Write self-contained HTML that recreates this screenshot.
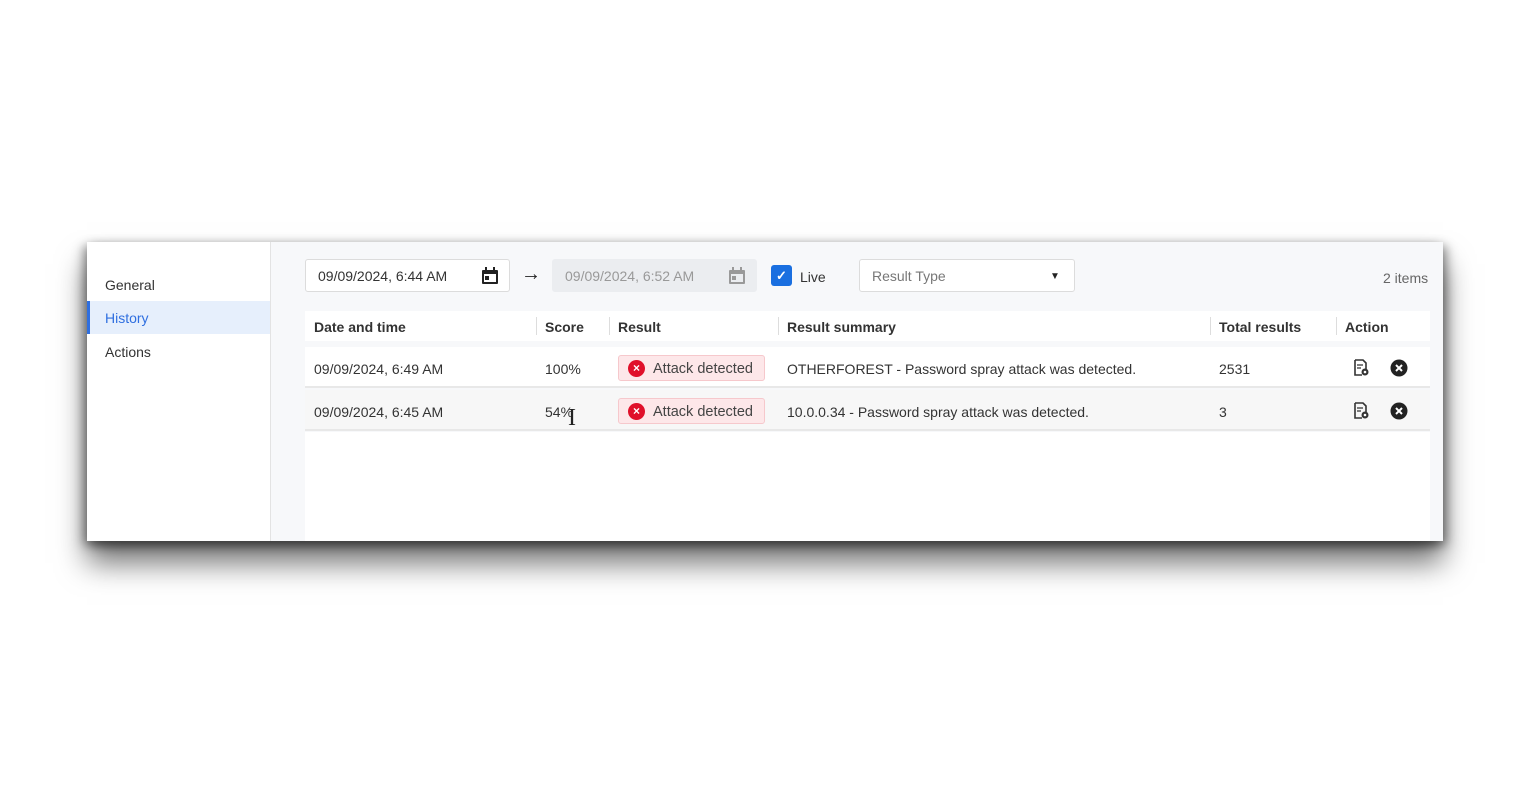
<!DOCTYPE html>
<html><head><meta charset="utf-8"><style>
*{box-sizing:border-box;margin:0;padding:0}
body{width:1536px;height:786px;background:#fff;font-family:"Liberation Sans",sans-serif;font-size:14px;color:#333;position:relative;overflow:hidden}
.panel{position:absolute;left:87px;top:242px;width:1356px;height:299px;background:#f7f8fa;box-shadow:0 22px 28px rgba(0,0,0,.55),-4px 4px 10px rgba(0,0,0,.35),4px 4px 10px rgba(0,0,0,.35)}
.side{position:absolute;left:0;top:0;width:184px;height:299px;background:#fff;border-right:1px solid #e3e3e3}
.side div{position:absolute;left:18px}
.hist{position:absolute;left:0!important;top:59px;width:183px;height:33px;background:#e6effc;border-left:3px solid #2f6fe0;color:#2f6fe0;padding-left:15px;line-height:35px}
.abs{position:absolute}
.box{position:absolute;height:33px;border:1px solid #dcdcdc;border-radius:3px;background:#fff;line-height:33px;padding-left:12px}
.th{position:absolute;top:69px;left:218px;width:1125px;height:30px;background:#fff;font-weight:bold;color:#333}
.th span,.row span{position:absolute;top:0}
.th span{line-height:32px}
.sep{position:absolute;top:6px;width:1px;height:18px;background:#ddd}
.row{position:absolute;left:218px;width:1125px;height:41px;background:#fff;line-height:44px;border-bottom:2px solid #e8e8e8}
.badge{position:absolute;top:8px;left:313px;width:147px;height:26px;background:#fde7e9;border:1px solid #f6c8cc;border-radius:3px;line-height:26px;padding-left:34px;color:#444;font-size:14.5px}
.badge i{position:absolute;left:9px;top:4px;width:17px;height:17px;border-radius:50%;background:#e0102a;color:#fff;font-style:normal;font-size:12px;line-height:17px;text-align:center;font-weight:bold}
</style></head><body>
<div class="panel">
 <div class="side">
  <div style="top:35px">General</div>
  <div class="hist">History</div>
  <div style="top:102px">Actions</div>
 </div>
 <div class="box" style="left:218px;top:17px;width:205px">09/09/2024, 6:44 AM
  <svg class="abs" style="left:175px;top:7px" width="18" height="18" viewBox="0 0 18 18"><rect x="1" y="3" width="16" height="14" rx="1" fill="#222"/><rect x="4" y="0" width="2" height="5" fill="#222"/><rect x="12" y="0" width="2" height="5" fill="#222"/><rect x="3" y="7" width="12" height="8" fill="#fff"/><rect x="4" y="9" width="4" height="4" fill="#222"/></svg></div>
 <div class="abs" style="left:434px;top:21px;font-size:20px;color:#222">→</div>
 <div class="box" style="left:465px;top:17px;width:205px;background:#ebedf0;border-color:#ebedf0;color:#999">09/09/2024, 6:52 AM
  <svg class="abs" style="left:175px;top:7px" width="18" height="18" viewBox="0 0 18 18"><rect x="1" y="3" width="16" height="14" rx="1" fill="#999"/><rect x="4" y="0" width="2" height="5" fill="#999"/><rect x="12" y="0" width="2" height="5" fill="#999"/><rect x="3" y="7" width="12" height="8" fill="#ebedf0"/><rect x="4" y="9" width="4" height="4" fill="#999"/></svg></div>
 <div class="abs" style="left:684px;top:23px;width:21px;height:21px;background:#1a6fe0;border-radius:3px;color:#fff;text-align:center;line-height:21px;font-size:13px;font-weight:bold">✓</div>
 <div class="abs" style="left:713px;top:27px;color:#333">Live</div>
 <div class="box" style="left:772px;top:17px;width:216px;color:#777">Result Type<span class="abs" style="left:190px;top:0;font-size:10px;color:#222">▼</span></div>
 <div class="abs" style="left:1296px;top:28px;color:#666">2 items</div>
 <div class="abs" style="left:218px;top:190px;width:1125px;height:109px;background:#fff"></div>
 <div class="th">
  <span style="left:9px">Date and time</span>
  <div class="sep" style="left:231px"></div><span style="left:240px">Score</span>
  <div class="sep" style="left:304px"></div><span style="left:313px">Result</span>
  <div class="sep" style="left:473px"></div><span style="left:482px">Result summary</span>
  <div class="sep" style="left:905px"></div><span style="left:914px">Total results</span>
  <div class="sep" style="left:1031px"></div><span style="left:1040px">Action</span>
 </div>
 <div class="row" style="top:105px">
  <span style="left:9px">09/09/2024, 6:49 AM</span><span style="left:240px">100%</span>
  <div class="badge"><i>×</i>Attack detected</div>
  <span style="left:482px">OTHERFOREST - Password spray attack was detected.</span>
  <span style="left:914px">2531</span>
  <svg class="abs" style="left:1047px;top:12px" width="18" height="18" viewBox="0 0 18 18"><path d="M3 1h8l3 3v6M3 1v15h7" fill="none" stroke="#333" stroke-width="1.6"/><path d="M5 6h6M5 9h4" stroke="#333" stroke-width="1.3"/><circle cx="13" cy="13" r="3.5" fill="#333"/><circle cx="13" cy="13" r="1.3" fill="#fff"/></svg>
  <svg class="abs" style="left:1085px;top:12px" width="18" height="18" viewBox="0 0 18 18"><circle cx="9" cy="9" r="8.5" fill="#222"/><path d="M6 6l6 6M12 6l-6 6" stroke="#fff" stroke-width="2"/></svg>
 </div>
 <div class="row" style="top:148px;background:#f7f7f7">
  <span style="left:9px">09/09/2024, 6:45 AM</span><span style="left:240px">54%</span>
  <div class="badge"><i>×</i>Attack detected</div>
  <span style="left:482px">10.0.0.34 - Password spray attack was detected.</span>
  <span style="left:914px">3</span>
  <svg class="abs" style="left:1047px;top:12px" width="18" height="18" viewBox="0 0 18 18"><path d="M3 1h8l3 3v6M3 1v15h7" fill="none" stroke="#333" stroke-width="1.6"/><path d="M5 6h6M5 9h4" stroke="#333" stroke-width="1.3"/><circle cx="13" cy="13" r="3.5" fill="#333"/><circle cx="13" cy="13" r="1.3" fill="#fff"/></svg>
  <svg class="abs" style="left:1085px;top:12px" width="18" height="18" viewBox="0 0 18 18"><circle cx="9" cy="9" r="8.5" fill="#222"/><path d="M6 6l6 6M12 6l-6 6" stroke="#fff" stroke-width="2"/></svg>
 </div>
 <div class="abs" style="left:481px;top:163px;font-size:24px;color:#222;font-family:'Liberation Serif',serif">I</div>
</div>
</body></html>
